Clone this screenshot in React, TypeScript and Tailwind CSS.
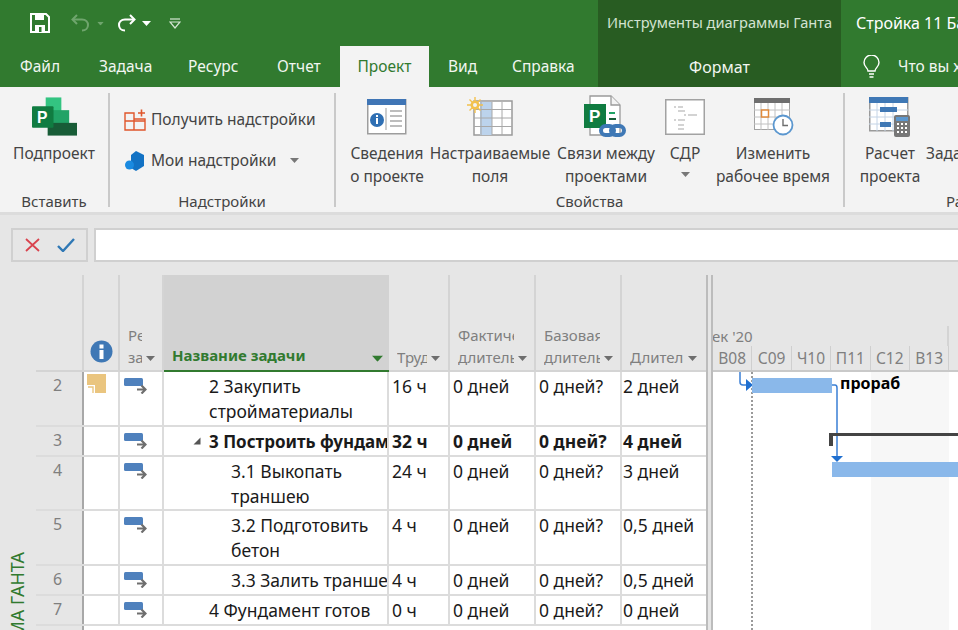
import React from "react";

const font = { fontFamily: '"Noto Sans", sans-serif' };

function Caret({ className = "" }: { className?: string }) {
  return (
    <svg width="9" height="5" viewBox="0 0 9 5" className={className}>
      <path d="M0 0h9L4.5 5z" fill="currentColor" />
    </svg>
  );
}

function ProjectLogo() {
  return (
    <svg width="45" height="40" viewBox="0 0 46 40">
      <rect x="14" y="0" width="16" height="16" fill="#33c481" />
      <rect x="14" y="13" width="24" height="14" fill="#21a366" />
      <rect x="16" y="26" width="30" height="13" fill="#185c37" />
      <rect x="0" y="9" width="22" height="22" rx="1" fill="#107c41" />
      <text x="5" y="26" fontSize="16" fontWeight="700" fill="#fff" fontFamily="Liberation Sans">P</text>
    </svg>
  );
}

function InfoIcon() {
  return (
    <svg width="40" height="36" viewBox="0 0 40 36">
      <rect x="0.75" y="0.75" width="38" height="34" fill="#fff" stroke="#9d9d9d" strokeWidth="1.5" />
      <rect x="0" y="0" width="39" height="6" fill="#3f75b5" />
      <circle cx="10" cy="21" r="7" fill="#2f6fb3" />
      <rect x="9" y="19" width="2" height="6" fill="#fff" />
      <rect x="9" y="16" width="2" height="2" fill="#fff" />
      <path d="M19 9v22" stroke="#9d9d9d" />
      <path d="M23 12h12M23 17h12M23 22h12M23 27h12" stroke="#a8a8a8" strokeWidth="1.5" />
    </svg>
  );
}

function FieldsIcon() {
  return (
    <svg width="46" height="40" viewBox="0 0 46 40">
      <rect x="7" y="4" width="38" height="34" fill="#fff" stroke="#9a9a9a" strokeWidth="1.5" />
      <rect x="13" y="5" width="12" height="33" fill="#bcd3ec" />
      <path d="M7 12.5h38M7 21h38M7 29.5h38M14 5v33M25 5v33M35 5v33" stroke="#a8a8a8" />
      <circle cx="8" cy="8" r="4.5" fill="#f2c14e" />
      <path d="M8 0v16M0 8h16M2.5 2.5l11 11M13.5 2.5l-11 11" stroke="#f2c14e" strokeWidth="1.4" />
      <circle cx="8" cy="8" r="2" fill="#f3f3f3" />
    </svg>
  );
}

function LinksIcon() {
  return (
    <svg width="44" height="44" viewBox="0 0 44 44">
      <path d="M6 1h21l9 9v30H6z" fill="#fff" stroke="#9a9a9a" strokeWidth="1.3" />
      <path d="M27 1v9h9" fill="#f3f3f3" stroke="#9a9a9a" strokeWidth="1.3" />
      <rect x="0" y="9" width="22" height="24" fill="#107c41" />
      <text x="5" y="27" fontSize="17" fontWeight="700" fill="#fff" fontFamily="Liberation Sans">P</text>
      <path d="M25 18h6" stroke="#21a366" strokeWidth="2" />
      <path d="M25 24h7" stroke="#185c37" strokeWidth="2" />
      <g fill="none" stroke="#3f78b5" strokeWidth="4">
        <rect x="17" y="31" width="13" height="9" rx="4.5" />
        <rect x="27" y="31" width="13" height="9" rx="4.5" />
      </g>
    </svg>
  );
}

function WbsIcon() {
  return (
    <svg width="40" height="36" viewBox="0 0 40 36">
      <rect x="0.75" y="0.75" width="38.5" height="34.5" fill="#fff" stroke="#a2a2a2" strokeWidth="1.5" />
      <path d="M9 8h2M13 8h5M13 12h7M19 16h2M23 16h9M9 21h2M13 21h7M13 26h6M13 30h6" stroke="#a8a8a8" strokeWidth="1.2" />
    </svg>
  );
}

function CalendarIcon() {
  return (
    <svg width="42" height="38" viewBox="0 0 42 38" className="ml-[4px]">
      <rect x="0.5" y="0.5" width="35" height="31" fill="#fff" stroke="#a2a2a2" />
      <rect x="0" y="0" width="36" height="5" fill="#6e6e6e" />
      <path d="M0 12h36M0 19h36M0 26h36M7 5v27M14 5v27M21 5v27M28 5v27" stroke="#c0c0c0" />
      <rect x="7.5" y="12" width="7" height="7" fill="#fff" stroke="#e08a3c" strokeWidth="1.5" />
      <circle cx="29" cy="27" r="9.5" fill="#fff" stroke="#5b97cf" strokeWidth="1.8" />
      <path d="M29 21v6.500h5" fill="none" stroke="#6e6e6e" strokeWidth="1.4" />
    </svg>
  );
}

function CalcIcon() {
  return (
    <svg width="42" height="40" viewBox="0 0 42 40">
      <rect x="0.75" y="0.75" width="38" height="33" fill="#fff" stroke="#9a9a9a" strokeWidth="1.5" />
      <rect x="0" y="0" width="39" height="6" fill="#3f78b5" />
      <path d="M0 13h39M0 20h39M0 27h39M8 6v28M16 6v28M24 6v28" stroke="#c4d4e6" />
      <rect x="11" y="10" width="17" height="5" fill="#3f78b5" />
      <rect x="11" y="25" width="11" height="5" fill="#3f78b5" />
      <rect x="25" y="18" width="16" height="22" rx="2" fill="#777" />
      <rect x="27" y="20" width="12" height="4" fill="#5b97cf" />
      <path d="M28 27h2M32 27h2M36 27h2M28 31h2M32 31h2M36 31h2M28 35h2M32 35h2M36 35h2" stroke="#fff" strokeWidth="2" />
    </svg>
  );
}

function ModeIcon() {
  return (
    <svg width="23" height="16" viewBox="0 0 23 16">
      <rect x="0" y="0" width="19" height="8" rx="1.5" fill="#4f81bd" />
      <path d="M13 11.500h8M17.500 7.500l4 4-4 4" fill="none" stroke="#6e6e6e" strokeWidth="2.200" />
    </svg>
  );
}

function Big({ icon, lines, caret, w }: { icon: React.ReactNode; lines: string[]; caret?: boolean; w: string }) {
  return (
    <div className={`flex flex-col items-center shrink-0 ${w}`}>
      <div className="flex items-center justify-center mt-[2px] h-[44px] shrink-0">{icon}</div>
      <div className="mt-[3px] shrink-0 text-center text-[15.5px] leading-[23px] text-[#444] whitespace-nowrap">
        {lines.map((l) => (
          <div key={l}>{l}</div>
        ))}
        {caret && <Caret className="mx-auto mt-[7px] text-[#777]" />}
      </div>
    </div>
  );
}

function Group({ label, className, children }: { label: string; className: string; children: React.ReactNode }) {
  return (
    <div className={`flex flex-col h-[114px] shrink-0 border-r-2 border-[#c9c9c9] ${className}`}>
      <div className="flex-1 flex min-h-0 overflow-hidden">{children}</div>
      <div className="text-center text-[15px] leading-[20px] -mb-[4px] text-[#444] whitespace-nowrap">{label}</div>
    </div>
  );
}

type Row = { n: number; h: string; note?: boolean; name: string[]; indent: string; bold?: boolean; work: string; act: string; base: string; dur: string; arrow?: boolean };

const rows: Row[] = [
  { n: 2, h: "h-[55px]", note: true, name: ["2 Закупить", "стройматериалы"], indent: "pl-[45px]", work: "16 ч", act: "0 дней", base: "0 дней?", dur: "2 дней" },
  { n: 3, h: "h-[30px]", name: ["3 Построить фундам"], indent: "pl-[45px]", bold: true, arrow: true, work: "32 ч", act: "0 дней", base: "0 дней?", dur: "4 дней" },
  { n: 4, h: "h-[54px]", name: ["3.1 Выкопать", "траншею"], indent: "pl-[67px]", work: "24 ч", act: "0 дней", base: "0 дней?", dur: "3 дней" },
  { n: 5, h: "h-[55px]", name: ["3.2 Подготовить", "бетон"], indent: "pl-[67px]", work: "4 ч", act: "0 дней", base: "0 дней?", dur: "0,5 дней" },
  { n: 6, h: "h-[30px]", name: ["3.3 Залить транше"], indent: "pl-[67px]", work: "4 ч", act: "0 дней", base: "0 дней?", dur: "0,5 дней" },
  { n: 7, h: "h-[30px]", name: ["4 Фундамент готов"], indent: "pl-[45px]", work: "0 ч", act: "0 дней", base: "0 дней?", dur: "0 дней" },
];

function HeaderCell({ w, l1, l2, clip, pl = "pl-[8px]", last }: { w: string; l1?: string; l2: string; clip: string; pl?: string; last?: boolean }) {
  return (
    <div className={`${w} shrink-0 h-full flex flex-col justify-end pb-[2px] ${last ? "" : "border-r-2 border-[#d4d4d4]"} ${pl} text-[15px] leading-[22px] text-[#7f7f7f]`}>
      {l1 && <div className={`overflow-hidden whitespace-nowrap ${clip}`}>{l1}</div>}
      <div className="flex items-center gap-[4px]">
        <span className={`overflow-hidden whitespace-nowrap ${clip}`}>{l2}</span>
        <Caret className="text-[#6e6e6e] shrink-0 mt-[3px]" />
      </div>
    </div>
  );
}

const days = ["В08", "С09", "Ч10", "П11", "С12", "В13", "П"];

export default function App() {
  return (
    <div className="w-[958px] h-[630px] overflow-hidden bg-[#e6e6e6] flex flex-col" style={font}>
      {/* title bar */}
      <div className="h-[46px] flex bg-[#317a2f] text-white shrink-0">
        <div className="w-[598px] flex items-center pl-[30px] gap-[21px]">
          <svg width="20" height="20" viewBox="0 0 20 20" className="-mt-[1px]">
            <path d="M1 1h15l3 3v15H1z" fill="none" stroke="#fff" strokeWidth="2" />
            <rect x="5" y="1" width="9" height="6" fill="#fff" />
            <rect x="5" y="12" width="10" height="7" fill="#fff" />
            <rect x="9" y="14" width="2.500" height="5" fill="#317a2f" />
          </svg>
          <div className="flex items-center gap-[5px] text-[#6fa56d]">
            <svg width="20" height="18" viewBox="0 0 20 18">
              <path d="M6 1L1.500 5.500 6 10" fill="none" stroke="currentColor" strokeWidth="2" />
              <path d="M2 5.500h9c8 0 8 11 0 11" fill="none" stroke="currentColor" strokeWidth="2" />
            </svg>
            <Caret className="scale-75" />
          </div>
          <div className="flex items-center gap-[6px] -ml-[10px]">
            <svg width="20" height="18" viewBox="0 0 20 18">
              <path d="M14 1l4.500 4.500L14 10" fill="none" stroke="#fff" strokeWidth="2" />
              <path d="M18 5.500H9c-8 0-8 11 0 11" fill="none" stroke="#fff" strokeWidth="2" />
            </svg>
            <Caret />
          </div>
          <svg width="12" height="11" viewBox="0 0 12 11" className="-ml-[3px]">
            <path d="M1 1h10" stroke="#d5e6d4" strokeWidth="1.200" />
            <path d="M1 4h10L6 10z" fill="none" stroke="#d5e6d4" strokeWidth="1.200" />
          </svg>
        </div>
        <div className="w-[243px] bg-[#285c22] flex items-center justify-center text-[14.600px] text-[#d3e3d1] whitespace-nowrap">Инструменты диаграммы Ганта</div>
        <div className="flex-1 flex items-center pl-[15px] text-[16px] whitespace-nowrap overflow-hidden">Стройка 11 Базовый план</div>
      </div>

      {/* tabs */}
      <div className="h-[41px] flex bg-[#317a2f] text-[15.500px] text-[#f2f6f1] shrink-0 whitespace-nowrap">
        <div className="w-[598px] flex">
          <div className="w-[80px] pl-[20px] pt-[9px]">Файл</div>
          <div className="w-[89px] pl-[19px] pt-[9px]">Задача</div>
          <div className="w-[89px] pl-[19px] pt-[9px]">Ресурс</div>
          <div className="w-[82px] pl-[19px] pt-[9px]">Отчет</div>
          <div className="w-[89px] bg-[#f3f3f3] text-[#317a2f] text-center pt-[9px]">Проект</div>
          <div className="w-[64px] pl-[19px] pt-[9px]">Вид</div>
          <div className="pl-[19px] pt-[9px]">Справка</div>
        </div>
        <div className="w-[243px] bg-[#285c22] text-center pt-[9px] text-[16px]">Формат</div>
        <div className="flex-1 flex items-start pl-[22px] pt-[9px] gap-[18px] overflow-hidden">
          <svg width="17" height="24" viewBox="0 0 17 24" className="shrink-0">
            <path d="M5 16c0-3-4-4-4-8.500a7.500 7.500 0 0 1 15 0c0 4.500-4 5.500-4 8.500z" fill="none" stroke="#fff" strokeWidth="1.400" />
            <path d="M6 19h5M6.500 22h4" stroke="#fff" strokeWidth="1.400" />
          </svg>
          <span>Что вы хотите сделать?</span>
        </div>
      </div>

      {/* ribbon */}
      <div className="h-[128px] shrink-0 bg-[#f3f3f3] border-b-[3px] border-[#dcdcdc] flex items-start pt-[6px] overflow-hidden">
        <Group label="Вставить" className="w-[110px]">
          <div className="w-[108px] flex flex-col items-center">
            <div className="mt-[2px] h-[44px] shrink-0 flex items-center"><ProjectLogo /></div>
            <div className="mt-[3px] text-[15.500px] leading-[23px] text-[#444]">Подпроект</div>
          </div>
        </Group>
        <Group label="Надстройки" className="w-[226px]">
          <div className="flex flex-col pl-[14px] pt-[13px]">
            <div className="flex items-center h-[27px] gap-[5px]">
              <svg width="22" height="22" viewBox="0 0 22 22">
                <path d="M1 4h9v17H1zM10 10h11v11H10zM1 12h20" fill="none" stroke="#e0562b" strokeWidth="1.400" />
                <path d="M14 4h7M17.500 0.500v7" stroke="#e0562b" strokeWidth="1.600" />
              </svg>
              <span className="text-[15.500px] text-[#444] whitespace-nowrap">Получить надстройки</span>
            </div>
            <div className="flex items-center h-[27px] gap-[6px] mt-[14px]">
              <svg width="20" height="20" viewBox="0 0 20 20" className="ml-[1px]">
                <path d="M11 0l8 4v11l-8 5-5-3V4z" fill="#1272c4" />
                <circle cx="4.500" cy="14" r="4.500" fill="#1a8ae0" />
              </svg>
              <span className="text-[15.500px] text-[#444] whitespace-nowrap">Мои надстройки</span>
              <Caret className="text-[#777] ml-[8px]" />
            </div>
          </div>
        </Group>
        <Group label="Свойства" className="w-[509px]">
          <div className="flex">
            <Big w="w-[102px]" icon={<InfoIcon />} lines={["Сведения", "о проекте"]} />
            <Big w="w-[104px]" icon={<FieldsIcon />} lines={["Настраиваемые", "поля"]} />
            <Big w="w-[128px]" icon={<LinksIcon />} lines={["Связи между", "проектами"]} />
            <Big w="w-[30px]" icon={<WbsIcon />} lines={["СДР"]} caret />
            <Big w="w-[146px]" icon={<CalendarIcon />} lines={["Изменить", "рабочее время"]} />
          </div>
        </Group>
        <div className="flex flex-col h-[114px] flex-1 overflow-visible min-w-0">
          <div className="flex-1 min-h-0 flex pl-[15px] gap-[6px] overflow-hidden">
            <Big w="w-[60px]" icon={<CalcIcon />} lines={["Расчет", "проекта"]} />
            <div className="mt-[49px] text-[15.500px] leading-[23px] text-[#444] whitespace-nowrap">Задать</div>
          </div>
          <div className="text-[15px] leading-[20px] -mb-[4px] text-[#444] pl-[101px] whitespace-nowrap">Расписание</div>
        </div>
      </div>

      {/* formula bar */}
      <div className="h-[60px] shrink-0 flex items-start pt-[13px] pl-[11px] gap-[6px]">
        <div className="w-[77px] h-[34px] border-2 border-[#d0d0d0] flex items-center pl-[12px] gap-[17px]">
          <svg width="15" height="14" viewBox="0 0 15 14"><path d="M1 1l13 12M14 1L1 13" stroke="#d9434e" strokeWidth="1.800" /></svg>
          <svg width="18" height="14" viewBox="0 0 18 14"><path d="M1 8l5 5L17 1" fill="none" stroke="#2f78b5" strokeWidth="2.400" /></svg>
        </div>
        <div className="flex-1 h-[34px] bg-white border-l-2 border-y-2 border-[#d0d0d0]" />
      </div>

      {/* sheet */}
      <div className="flex-1 flex overflow-hidden">
        <div className="w-[36px] shrink-0 overflow-hidden pt-[277px] pl-[7px]">
          <div className="[writing-mode:vertical-rl] rotate-180 whitespace-nowrap text-[18px] leading-[20px] text-[#317a2f]">ДИАГРАММА ГАНТА</div>
        </div>

        <div className="w-[672px] shrink-0 flex flex-col border-r-2 border-[#bcbcbc]">
          {/* head */}
          <div className="h-[97px] shrink-0 flex border-b-[2px] border-[#d4d4d4]">
            <div className="w-[48px] shrink-0 border-r-2 border-[#d4d4d4]" />
            <div className="w-[36px] shrink-0 border-r-2 border-[#d4d4d4] flex items-end justify-center pb-[7px]">
              <svg width="23" height="23" viewBox="0 0 23 23">
                <circle cx="11.500" cy="11.500" r="11" fill="#3f78b5" />
                <rect x="9.500" y="10" width="4" height="9" fill="#fff" />
                <rect x="9.500" y="4.500" width="4" height="4" fill="#fff" />
              </svg>
            </div>
            <HeaderCell w="w-[44px]" l1="Ресурс" l2="задачи" clip="w-[14px]" />
            <div className="w-[225px] shrink-0 bg-[#d2d2d2] border-b-2 border-[#317a2f] -mb-[2px] flex items-end justify-between pl-[8px] pr-[7px] pb-[2px] text-[15px] leading-[25px] font-bold text-[#317a2f]">
              <span>Название задачи</span>
              <Caret className="mb-[7px] scale-125" />
            </div>
            <HeaderCell w="w-[61px]" l2="Трудозатраты" clip="w-[30px]" />
            <HeaderCell w="w-[86px]" l1="Фактическая" l2="длительность" clip="w-[56px]" />
            <HeaderCell w="w-[86px]" l1="Базовая" l2="длительность" clip="w-[56px]" />
            <HeaderCell w="w-[84px]" l2="Длител" clip="w-[54px]" last />
          </div>

          {/* rows */}
          {rows.map((r) => (
            <div key={r.n} className={`${r.h} shrink-0 flex bg-white border-b-2 border-[#dcdcdc] text-[17.500px] leading-[25px] text-[#1a1a1a] ${r.bold ? "font-bold" : ""}`}>
              <div className="w-[48px] shrink-0 bg-[#e6e6e6] border-r-2 border-[#a8a8a8] text-center pr-[3px] pt-[1px] text-[16px] text-[#7f7f7f] font-normal">{r.n}</div>
              <div className="w-[36px] shrink-0 border-r-2 border-[#dcdcdc] pl-[3px] pt-[2px]">
                {r.note && (
                  <svg width="20" height="20" viewBox="0 0 20 20">
                    <path d="M0 0h19v19H8V11H0z" fill="#eac57f" />
                    <path d="M1 13h5v6" fill="none" stroke="#eac57f" strokeWidth="1.400" />
                  </svg>
                )}
              </div>
              <div className="w-[44px] shrink-0 border-r-2 border-[#dcdcdc] pl-[4px] pt-[6px]"><ModeIcon /></div>
              <div className={`w-[225px] shrink-0 border-r-2 border-[#dcdcdc] ${r.indent} ${r.bold ? "text-[17px]" : ""} pt-[2px] whitespace-nowrap overflow-hidden relative`}>
                {r.arrow && (
                  <svg width="8" height="8" viewBox="0 0 8 8" className="absolute left-[29px] top-[10px]">
                    <path d="M7.500 0.500v7h-7z" fill="#555" />
                  </svg>
                )}
                {r.name.map((t) => (
                  <div key={t}>{t}</div>
                ))}
              </div>
              <div className="w-[61px] shrink-0 border-r-2 border-[#dcdcdc] pl-[3px] pt-[2px] whitespace-nowrap">{r.work}</div>
              <div className="w-[86px] shrink-0 border-r-2 border-[#dcdcdc] pl-[3px] pt-[2px] whitespace-nowrap">{r.act}</div>
              <div className="w-[86px] shrink-0 border-r-2 border-[#dcdcdc] pl-[3px] pt-[2px] whitespace-nowrap">{r.base}</div>
              <div className="w-[84px] shrink-0 pl-[1px] pt-[2px] whitespace-nowrap">{r.dur}</div>
            </div>
          ))}
          <div className="flex-1 flex">
            <div className="w-[48px] bg-[#e6e6e6] border-r-2 border-[#a8a8a8]" />
            <div className="flex-1 bg-white" />
          </div>
        </div>

        {/* gantt */}
        <div className="flex-1 ml-[3px] border-l-2 border-[#bcbcbc] flex flex-col overflow-hidden">
          <div className="h-[97px] shrink-0 flex flex-col justify-end border-b-2 border-[#c9c9c9] text-[15px] text-[#7f7f7f]">
            <div className="flex h-[20px] leading-[20px] whitespace-nowrap">
              <div className="w-[237px] shrink-0 -ml-[1px] overflow-hidden border-r-2 border-[#d4d4d4]">ек '20</div>
            </div>
            <div className="flex h-[24px] leading-[24px]">
              {days.map((d) => (
                <div key={d} className="w-[39.400px] shrink-0 text-center text-[15.500px] border-r border-[#cfcfcf] whitespace-nowrap overflow-hidden">{d}</div>
              ))}
            </div>
          </div>
          <div className="flex-1 relative bg-white">
            <div className="absolute left-[158px] w-[78px] top-0 bottom-0 bg-[#f7f7f7]" />
            <div className="absolute left-[38px] top-0 bottom-0 border-l-2 border-dotted border-[#9a9a9a]" />
            <svg className="absolute left-0 top-0" width="246" height="110" viewBox="0 0 246 110">
              <path d="M27 0v10q0 3 3 3h6" fill="none" stroke="#3a7fd5" strokeWidth="1.500" />
              <path d="M33 7l7 6-7 6z" fill="#1f6fd0" />
              <path d="M119 13h3q2 0 2 3v70" fill="none" stroke="#3a7fd5" strokeWidth="1.500" />
              <path d="M118 84h12l-6 6z" fill="#1f6fd0" />
            </svg>
            <div className="absolute left-[39px] top-[6px] w-[80px] h-[15px] bg-[#8ab8ea]" />
            <div className="absolute left-[127px] top-[0px] text-[16px] leading-[22px] font-bold text-black">прораб</div>
            <div className="absolute left-[116px] top-[61px] right-0 h-[3px] bg-[#444]" />
            <div className="absolute left-[116px] top-[61px] w-[4px] h-[13px] bg-[#444]" />
            <div className="absolute left-[119px] top-[90px] right-0 h-[15px] bg-[#8ab8ea]" />
          </div>
        </div>
      </div>
    </div>
  );
}
